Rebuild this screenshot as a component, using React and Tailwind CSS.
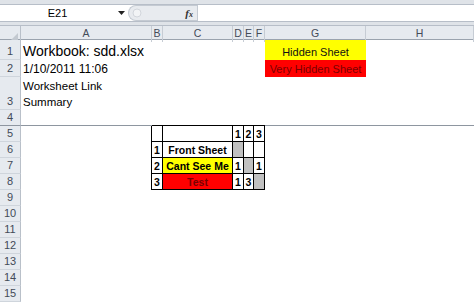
import React from "react";

const COLS = "grid grid-cols-[21px_131px_11px_70px_11px_10px_11px_101px_1fr]";
const FONT = { fontFamily: '"Liberation Sans", Arial, sans-serif' };

function RowHead({ n, freeze }) {
  return (
    <div
      className={
        "flex items-end justify-center pb-px bg-[#e6eaef] border-r border-[#b9c0c9] text-[11px] leading-[14px] text-[#434b58] " +
        (freeze ? "border-b border-b-[#8e96a0]" : "border-b border-b-[#cfd5dc]")
      }
    >
      {n}
    </div>
  );
}

function T({ children, className = "" }) {
  return (
    <div
      className={
        "flex items-end justify-center border-r border-b border-black text-[10.5px] leading-[14px] font-bold " +
        className
      }
    >
      {children}
    </div>
  );
}

export default function App() {
  const headers = ["A", "B", "C", "D", "E", "F", "G", "H"];
  const emptyRows = [9, 10, 11, 12, 13, 14, 15];

  return (
    <div className="w-[474px] h-[302px] overflow-hidden bg-white" style={FONT}>
      {/* ribbon strip */}
      <div className="h-[5px] bg-[#dfe3e8] border-b border-[#b7bec8]" />

      {/* formula bar */}
      <div className="flex h-[16px] bg-white">
        <div className="w-[115px] flex items-center justify-center text-[11px] text-black">E21</div>
        <div className="w-[13px] flex items-center justify-center">
          <svg width="7" height="4" viewBox="0 0 7 4">
            <path d="M0 0 L7 0 L3.5 4 Z" fill="#222" />
          </svg>
        </div>
        <div className="w-[69px] flex items-center justify-between rounded-l-full bg-[#e8ebef] border border-[#c4cad2] border-r-0 pl-[3px] pr-[4px]">
          <svg width="10" height="10" viewBox="0 0 10 10">
            <circle cx="5" cy="5" r="4" fill="#f2f4f6" stroke="#d2d6dc" />
          </svg>
          <span className="text-[11px] italic font-bold text-[#333]" style={{ fontFamily: '"Liberation Serif", serif' }}>
            f<span className="text-[8px]">x</span>
          </span>
        </div>
        <div className="flex-1 border-l border-[#c4cad2] bg-white" />
      </div>
      <div className="h-[5px] bg-[#dfe3e8] border-t border-b border-[#b7bec8]" />

      {/* column headers */}
      <div className={COLS + " h-[14px] bg-[#e6eaef] border-b border-[#9aa3ae]"}>
        <div className="relative border-r border-[#b9c0c9]">
          <svg className="absolute right-[2px] bottom-[2px]" width="7" height="7" viewBox="0 0 7 7">
            <path d="M7 0 L7 7 L0 7 Z" fill="#c3c9d0" />
          </svg>
        </div>
        {headers.map((h) => (
          <div
            key={h}
            className="flex items-center justify-center border-r border-[#c6ccd4] text-[10.5px] text-[#434b58]"
          >
            {h}
          </div>
        ))}
      </div>

      {/* row 1 */}
      <div className={COLS + " h-[20px]"}>
        <RowHead n="1" />
        <div className="flex items-end pl-[2px] text-[14px] leading-[18px] text-black whitespace-nowrap">
          Workbook: sdd.xlsx
        </div>
        <div />
        <div />
        <div />
        <div />
        <div />
        <div className="flex items-end justify-center bg-[#ffff00] text-[11px] leading-[16px] text-[#111]">
          Hidden Sheet
        </div>
        <div />
      </div>

      {/* row 2 */}
      <div className={COLS + " h-[17px]"}>
        <RowHead n="2" />
        <div className="flex items-end pl-[2px] text-[12px] leading-[15px] text-black">1/10/2011 11:06</div>
        <div />
        <div />
        <div />
        <div />
        <div />
        <div className="flex items-end justify-center bg-[#ff0000] text-[11px] leading-[15px] text-[#7a0000] whitespace-nowrap">
          Very Hidden Sheet
        </div>
        <div />
      </div>

      {/* row 3 */}
      <div className={COLS + " h-[33px]"}>
        <RowHead n="3" />
        <div className="flex flex-col justify-end pl-[2px] text-[11.5px] leading-[16px] text-black whitespace-nowrap">
          <span>Worksheet Link</span>
          <span>Summary</span>
        </div>
        <div />
        <div />
        <div />
        <div />
        <div />
        <div />
        <div />
      </div>

      {/* row 4, frozen pane line below */}
      <div className={COLS + " h-[16px]"}>
        <RowHead n="4" freeze />
        <div className="border-b border-[#8e96a0]" />
        <div className="border-b border-black" />
        <div className="border-b border-black" />
        <div className="border-b border-black" />
        <div className="border-b border-black" />
        <div className="border-b border-black" />
        <div className="border-b border-[#8e96a0]" />
        <div className="border-b border-[#8e96a0]" />
      </div>

      {/* row 5 */}
      <div className={COLS + " h-[16px]"}>
        <RowHead n="5" />
        <div className="border-r border-black" />
        <T />
        <T />
        <T className="text-black">1</T>
        <T className="text-black">2</T>
        <T className="text-black">3</T>
        <div />
        <div />
      </div>

      {/* row 6 */}
      <div className={COLS + " h-[16px]"}>
        <RowHead n="6" />
        <div className="border-r border-black" />
        <T className="text-black">1</T>
        <T className="text-black">Front Sheet</T>
        <T className="bg-[#c0c0c0]" />
        <T />
        <T />
        <div />
        <div />
      </div>

      {/* row 7 */}
      <div className={COLS + " h-[16px]"}>
        <RowHead n="7" />
        <div className="border-r border-black" />
        <T className="text-black">2</T>
        <T className="bg-[#ffff00] text-black">Cant See Me</T>
        <T className="text-black">1</T>
        <T className="bg-[#c0c0c0]" />
        <T className="text-black">1</T>
        <div />
        <div />
      </div>

      {/* row 8 */}
      <div className={COLS + " h-[16px]"}>
        <RowHead n="8" />
        <div className="border-r border-black" />
        <T className="text-black">3</T>
        <T className="bg-[#ff0000] text-[#7a0000]">Test</T>
        <T className="text-black">1</T>
        <T className="text-black">3</T>
        <T className="bg-[#c0c0c0]" />
        <div />
        <div />
      </div>

      {emptyRows.map((n) => (
        <div key={n} className={COLS + " h-[16px]"}>
          <RowHead n={String(n)} />
        </div>
      ))}
    </div>
  );
}
